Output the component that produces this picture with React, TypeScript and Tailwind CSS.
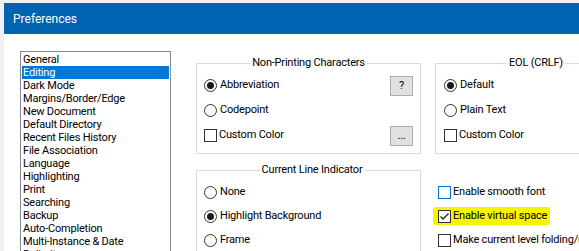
import React from 'react';

const PAGES = [
  'General',
  'Editing',
  'Dark Mode',
  'Margins/Border/Edge',
  'New Document',
  'Default Directory',
  'Recent Files History',
  'File Association',
  'Language',
  'Highlighting',
  'Print',
  'Searching',
  'Backup',
  'Auto-Completion',
  'Multi-Instance & Date',
  'Delimiter',
];

const FONT = 'font-["Segoe_UI",Roboto,"Liberation_Sans",sans-serif]';

function Radio({ label, checked }: { label: string; checked?: boolean }) {
  return (
    <label className="flex items-center gap-[3px]">
      <span className="w-[13px] h-[13px] rounded-full border border-[#333333] bg-white flex items-center justify-center shrink-0">
        {checked && <span className="w-[7px] h-[7px] rounded-full bg-[#1a1a1a]" />}
      </span>
      <span>{label}</span>
    </label>
  );
}

function Check({ label, checked, hover }: { label: string; checked?: boolean; hover?: boolean }) {
  return (
    <label className="flex items-center gap-[2px] whitespace-nowrap">
      <span
        className={`w-[13px] h-[13px] border bg-white flex items-center justify-center shrink-0 ${
          hover ? 'border-[#0078d7]' : 'border-[#333333]'
        }`}
      >
        {checked && (
          <svg width="11" height="11" viewBox="0 0 11 11">
            <polyline points="1.5,5.5 4,8 9.5,2.5" fill="none" stroke="#222" strokeWidth="1.3" />
          </svg>
        )}
      </span>
      <span>{label}</span>
    </label>
  );
}

function SmallButton({ text }: { text: string }) {
  return (
    <button
      type="button"
      className="w-[23px] h-[20px] bg-[#e1e1e1] border border-[#adadad] text-[11px] leading-none flex items-center justify-center"
    >
      {text}
    </button>
  );
}

function Group({ title, className, children }: { title: string; className?: string; children: React.ReactNode }) {
  return (
    <fieldset className={`border border-[#dcdcdc] min-w-0 ${className ?? ''}`}>
      <legend className="mx-auto px-[2px] leading-[16px]">{title}</legend>
      {children}
    </fieldset>
  );
}

export default function App() {
  return (
    <div
      className={`w-[579px] h-[251px] overflow-hidden bg-[#eef0f3] pl-[4px] pt-[3px] text-[11px] tracking-[-0.2px] text-black ${FONT}`}
    >
      <div className="h-[31px] bg-[#0063b1] text-white text-[12px] tracking-normal flex items-center pl-[9px]">
        Preferences
      </div>

      <div className="bg-white h-full flex items-start pt-[17px]">
        {/* page list */}
        <div className="ml-[16px] w-[151px] h-[260px] border border-[#828790] p-[1px] shrink-0">
          {PAGES.map((p) => (
            <div
              key={p}
              className={`h-[13px] leading-[13px] pl-[1px] whitespace-nowrap ${
                p === 'Editing' ? 'bg-[#0078d7] text-white' : ''
              }`}
            >
              {p}
            </div>
          ))}
        </div>

        {/* middle column */}
        <div className="ml-[25px] w-[225px] shrink-0 mt-[4px] flex flex-col gap-[8px]">
          <Group title="Non-Printing Characters" className="pl-[7px] pr-[7px] pt-[2px] pb-[5px]">
            <div className="h-[25px] flex items-center justify-between">
              <Radio label="Abbreviation" checked />
              <SmallButton text="?" />
            </div>
            <div className="h-[25px] flex items-center">
              <Radio label="Codepoint" />
            </div>
            <div className="h-[25px] flex items-center justify-between">
              <Check label="Custom Color" />
              <SmallButton text="..." />
            </div>
          </Group>

          <Group title="Current Line Indicator" className="pl-[7px] pt-[2px] h-[120px]">
            <div className="h-[24px] flex items-center">
              <Radio label="None" />
            </div>
            <div className="h-[24px] flex items-center">
              <Radio label="Highlight Background" checked />
            </div>
            <div className="h-[24px] flex items-center">
              <Radio label="Frame" />
            </div>
          </Group>
        </div>

        {/* right column */}
        <div className="ml-[14px] w-[194px] shrink-0 mt-[4px]">
          <Group title="EOL (CRLF)" className="pl-[8px] pt-[2px] pb-[5px]">
            <div className="h-[25px] flex items-center">
              <Radio label="Default" checked />
            </div>
            <div className="h-[25px] flex items-center">
              <Radio label="Plain Text" />
            </div>
            <div className="h-[25px] flex items-center">
              <Check label="Custom Color" />
            </div>
          </Group>

          <div className="mt-[26px] pl-[3px] flex flex-col">
            <div className="h-[24px] flex items-center">
              <Check label="Enable smooth font" hover />
            </div>
            <div className="h-[24px] flex items-center">
              <div className="-ml-[5px] pl-[5px] pr-[3px] h-[18px] flex items-center bg-[#f6f400] rounded-[3px]">
                <Check label="Enable virtual space" checked />
              </div>
            </div>
            <div className="h-[24px] flex items-center">
              <Check label="Make current level folding/unfolding" />
            </div>
          </div>
        </div>
      </div>
    </div>
  );
}
